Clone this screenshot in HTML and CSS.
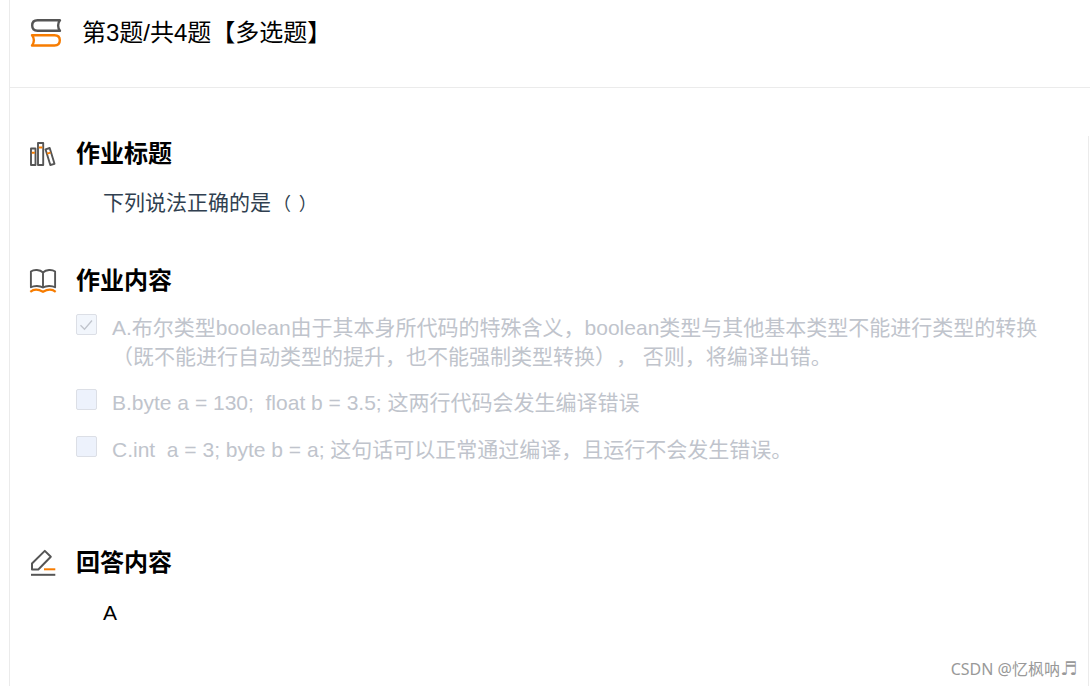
FILE: index.html
```html
<!DOCTYPE html>
<html lang="zh-CN">
<head>
<meta charset="utf-8">
<title>作业</title>
<link rel="stylesheet" href="styles.css">
</head>
<body>
<main class="panel">
  <header class="top">
    <svg class="top-icon" width="32" height="30" viewBox="0 0 32 30" fill="none" stroke-width="2.400" stroke-linejoin="round" stroke-linecap="round">
      <path stroke="#555" d="M30 2.300H7.500C3.500 2.300 2.200 4.800 2.200 7.500S3.500 12.700 7.500 12.700H30C27.500 10 27.500 5 30 2.300Z"/>
      <path stroke="#f77c00" d="M2 17.200H24.500C28.500 17.200 29.800 19.700 29.800 22.300S28.500 27.500 24.500 27.500H2C4.500 24.500 4.500 20 2 17.200Z"/>
    </svg>
    <h1>第3题/共4题【多选题】</h1>
  </header>
  <div class="body">
    <section class="title-section">
      <div class="section-head">
        <svg width="28" height="28" viewBox="0 0 28 28" fill="none" stroke="#555" stroke-width="1.900" stroke-linejoin="round">
          <path d="M2 8.500H6.500V25H2ZM9 3H14.200V25H9ZM16.500 9.300L20.700 8L25.500 23.800L21.300 25Z"/>
          <path stroke="#f77c00" d="M2.800 12.800H5.800M9.800 7.500H13.400M18 13.700L21.600 12.600"/>
        </svg>
        <h2>作业标题</h2>
      </div>
      <p class="question">下列说法正确的是<span class="paren">（</span> <span class="paren">）</span></p>
    </section>
    <section class="content-section">
      <div class="section-head">
        <svg width="28" height="28" viewBox="0 0 28 28" fill="none" stroke="#555" stroke-width="1.900" stroke-linejoin="round">
          <path d="M14 5.500C11 2.500 5 2.300 1.900 4.500V20.300C5 18.400 11 18.500 14 20.500C17 18.500 23 18.400 26.100 20.300V4.500C23 2.300 17 2.500 14 5.500ZM14 5.500V20.500"/>
          <path stroke="#f77c00" stroke-width="2.200" d="M1.300 24.800C4.500 22.300 9.500 22.300 14 24.800C18.500 22.300 23.500 22.300 26.700 24.800"/>
        </svg>
        <h2>作业内容</h2>
      </div>
      <ul class="options">
        <li>
          <span class="box checked"><svg width="19" height="19" viewBox="0 0 19 19" fill="none" stroke="#c0c4cc" stroke-width="1.300"><path d="M3.500 10.300L7.500 14.200L15 5.500"/></svg></span>
          <span class="label">A.布尔类型boolean由于其本身所代码的特殊含义，boolean类型与其他基本类型不能进行类型的转换
（既不能进行自动类型的提升，也不能强制类型转换）， 否则，将编译出错。</span>
        </li>
        <li><span class="box"></span><span class="label">B.byte a = 130;  float b = 3.5; 这两行代码会发生编译错误</span></li>
        <li><span class="box"></span><span class="label">C.int  a = 3; byte b = a; 这句话可以正常通过编译，且运行不会发生错误。</span></li>
      </ul>
    </section>
    <section>
      <div class="section-head">
        <svg width="28" height="28" viewBox="0 0 28 28" fill="none" stroke="#555" stroke-width="2" stroke-linejoin="round">
          <path d="M3 20.500V14.500L15.800 1.900L21.800 7.800L9.300 20.500Z"/>
          <path d="M2 25.800H26.300"/>
          <path stroke="#f77c00" d="M15 20.300H26.300"/>
        </svg>
        <h2>回答内容</h2>
      </div>
      <p class="answer">A</p>
    </section>
  </div>
</main>
<div class="watermark">CSDN @忆枫呐<span class="note">♬</span></div>
</body>
</html>
```
FILE: styles.css
```css
* {
  box-sizing: border-box;
}

body {
  margin: 0;
  height: 686px;
  overflow: hidden;
  background: #fff;
  color: #000;
  font-family: "Liberation Sans", "Noto Sans CJK SC", sans-serif;
  text-spacing-trim: space-all;
}

h1,
h2,
p,
ul {
  margin: 0;
  padding: 0;
}

svg {
  display: block;
  flex: none;
}

.panel {
  height: 686px;
  margin-left: 9px;
  border-left: 1px solid #ebebeb;
}

.top {
  display: flex;
  align-items: flex-start;
  height: 88px;
  padding: 18px 0 0 20px;
  border-bottom: 1px solid #ebebeb;
}

.top-icon {
  margin-right: 20px;
}

h1 {
  font-size: 24px;
  font-weight: 400;
  line-height: 30px;
}

.body {
  height: 550px;
  margin: 48px 1px 0 0;
  padding: 2px 0 0 19px;
  border-right: 1px solid #ebebeb;
}

.section-head {
  display: flex;
  align-items: center;
  gap: 19px;
  height: 32px;
}

h2 {
  font-size: 24px;
  font-weight: 700;
  line-height: 32px;
}

.title-section {
  height: 127px;
}

.content-section {
  height: 282px;
}

.question {
  padding: 18px 0 0 74px;
  color: #303f50;
  font-size: 21px;
  line-height: 30px;
}

.paren {
  padding-left: 2px;
  font-size: 18px;
}

.options {
  padding: 16px 0 0 47px;
  list-style: none;
  color: #c0c4cc;
  font-size: 21px;
  line-height: 29px;
}

.options li {
  display: flex;
  align-items: flex-start;
  margin-bottom: 18px;
}

.options li:first-child {
  margin-bottom: 17px;
}

.label {
  white-space: pre;
}

.box {
  flex: none;
  width: 21px;
  height: 21px;
  margin: 1px 15px 0 0;
  border: 1px solid #dcdfe6;
  border-radius: 2px;
  background: #edf2fc;
}

.checked {
  background: #f2f6fc;
}

.answer {
  padding: 19px 0 0 74px;
  font-size: 21px;
  line-height: 30px;
}

.watermark {
  position: absolute;
  right: 13px;
  bottom: 5px;
  color: #999;
  font-family: "Noto Sans", "Noto Sans CJK SC", sans-serif;
  font-size: 16px;
  line-height: 24px;
  white-space: nowrap;
}

.note {
  font-family: "DejaVu Sans", sans-serif;
  font-size: 19px;
  line-height: 1;
}
```
